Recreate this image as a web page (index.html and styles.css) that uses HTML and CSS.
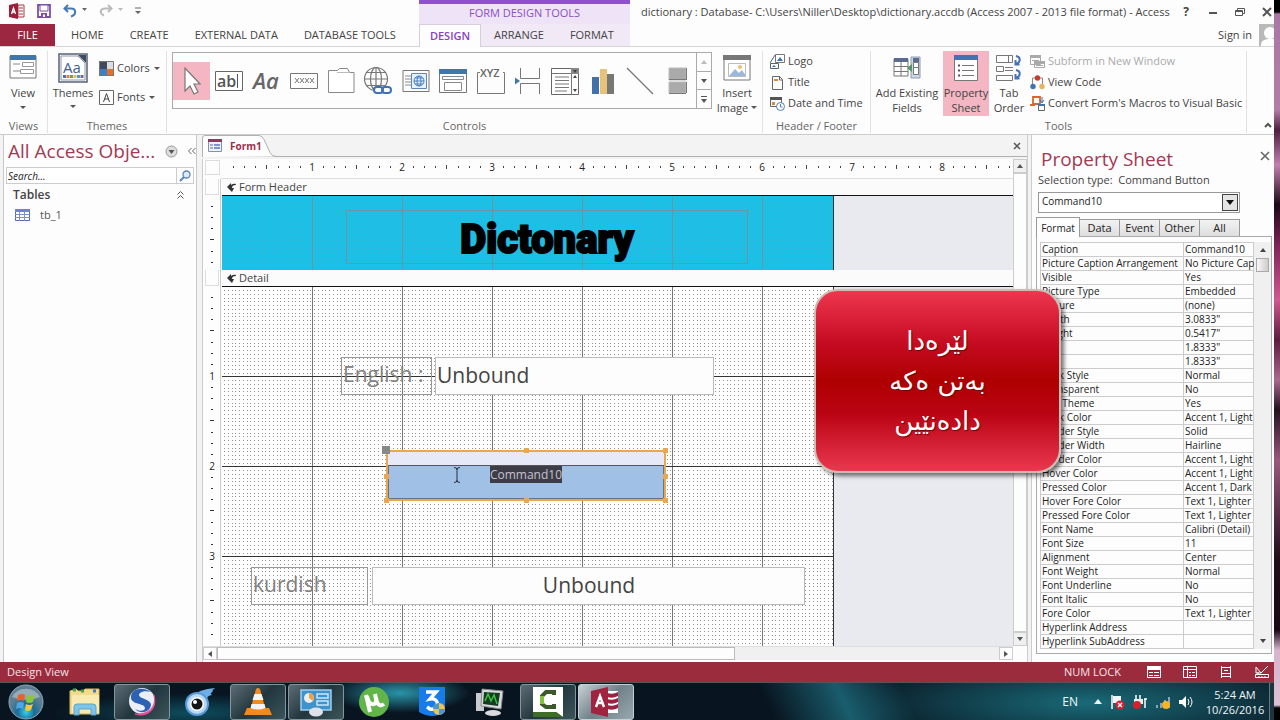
FILE: index.html
```html
<!DOCTYPE html>
<html lang="en">
<head>
<meta charset="utf-8">
<title>dictionary : Database - Access</title>
<link rel="stylesheet" href="styles.css">
</head>
<body>
<div class="screen">
<div class="window">

<header class="top">
  <div class="quick">
    <svg width="16" height="16" viewBox="0 0 16 16"><path d="M9 2h6v12H9z" fill="#fff" stroke="#a4373a"/><path d="M10 5h4M10 8h4M10 11h4" stroke="#a4373a"/><path d="M0 2l9-2v16l-9-2z" fill="#9b1f38"/><path d="M2.500 11l2-6 2 6M3.200 9h2.600" stroke="#fff" fill="none" stroke-width="1.300"/></svg>
    <svg width="14" height="14" viewBox="0 0 14 14"><path d="M1 1h12v12H1z" fill="#fff" stroke="#7a50a8" stroke-width="1.800"/><path d="M3 1h8v6H3z" fill="#fff" stroke="#7a50a8"/><path d="M4 9h6v4H4z" fill="#7a50a8"/><path d="M6 10.500h2V13H6z" fill="#fff"/></svg>
    <svg width="24" height="14" viewBox="0 0 24 14"><path d="M5 1L1.500 4.500 5 8M2 4.500h6c5 0 6 6 0 8" fill="none" stroke="#4478b8" stroke-width="2"/><path d="M19 4h5l-2.500 3z" fill="#666"/></svg>
    <svg width="24" height="14" viewBox="0 0 24 14"><path d="M9 1l3.500 3.500L9 8M12 4.500H6c-5 0-6 5-1 7" fill="none" stroke="#bbb" stroke-width="2"/><path d="M19 4h5l-2.500 3z" fill="#bbb"/></svg>
    <svg width="6" height="8" viewBox="0 0 6 8"><path d="M0 1h6" stroke="#666"/><path d="M0 4h6L3 7z" fill="#666"/></svg>
  </div>
  <div class="ctx-title">FORM DESIGN TOOLS</div>
  <div class="title-row"><span class="title">dictionary : Database- C:\Users\Niller\Desktop\dictionary.accdb (Access 2007 - 2013 file format) - Access</span>
    <div class="wincontrols">
      <button aria-label="Help">?</button>
      <button aria-label="Minimize"><svg width="10" height="10"><path d="M1 6h8" stroke="#555" stroke-width="2"/></svg></button>
      <button aria-label="Restore"><svg width="10" height="10" fill="none" stroke="#555"><path d="M.5 3.500h7v5h-7zM2.500 3V1.500h7v5H8M1 4.500h6"/></svg></button>
      <button aria-label="Close"><svg width="10" height="10"><path d="M1 1l8 8M9 1L1 9" stroke="#555" stroke-width="2"/></svg></button>
    </div>
  </div>
  <nav class="tabs"><button class="file">FILE</button><button>HOME</button><button>CREATE</button><button>EXTERNAL DATA</button><button>DATABASE TOOLS</button></nav>
  <nav class="tabs ctx-tabs"><button class="on">DESIGN</button><button>ARRANGE</button><button>FORMAT</button></nav>
  <div class="account"><button>Sign in</button><svg width="15" height="22"><path d="M0 0h15v22H0z" fill="#b9b9b9"/><circle cx="11" cy="9" r="6" fill="#fff"/><path d="M2 22c0-6 3-7 13-7v7z" fill="#fff"/></svg></div>
</header>

<section class="ribbon">
  <div class="group views">
    <div class="group-body"><button class="big"><svg width="28" height="28" viewBox="0 0 28 28"><path d="M1 2h26v22H1z" fill="#fff" stroke="#777"/><path d="M1 1h26v5H1z" fill="#3f77ad"/><path d="M4 10h7M4 17h7" stroke="#888"/><path d="M13.500 8.500h11v4h-11zM11.500 15.500h13v4h-13z" fill="#fff" stroke="#999"/></svg><span>View</span><i class="caret"></i></button></div>
    <h2>Views</h2>
  </div>
  <div class="group themes">
    <div class="group-body">
      <button class="big"><svg width="30" height="30" viewBox="0 0 30 30"><path d="M1 1h28v28H1z" fill="#fff" stroke="#566078" stroke-width="1.500"/><path d="M3 3h17l7 7v17H3z" fill="#fff" stroke="#8c96a8"/><path d="M20 2h8v8z" fill="#3d4a63"/><text x="5" y="20" class="theme-aa">Aa</text><path d="M5 23.500h3" stroke="#4472c4" stroke-width="3"/><path d="M8.500 23.500h3" stroke="#e67e30" stroke-width="3"/><path d="M12 23.500h3" stroke="#70a050" stroke-width="3"/><path d="M15.500 23.500h3" stroke="#e8c13c" stroke-width="3"/><path d="M19 23.500h3" stroke="#4e9bd0" stroke-width="3"/><path d="M22.500 23.500h3" stroke="#8060a0" stroke-width="3"/></svg><span>Themes</span><i class="caret"></i></button>
      <div class="stack">
        <button class="line"><svg width="15" height="15"><path d="M0 0h8v8H0z" fill="#3f4a60"/><path d="M8 0h7v8H8z" fill="#ddd"/><path d="M0 8h8v7H0z" fill="#3f80c0"/><path d="M8 8h7v7H8z" fill="#e2702c"/><path d="M.5.5h14v14H.5z" fill="none" stroke="#777"/></svg>Colors<i class="caret"></i></button>
        <button class="line"><svg width="15" height="15"><path d="M.5.5h14v14H.5z" fill="#fff" stroke="#666"/><path d="M4.500 12l3-8.500 3 8.500M5.500 9h4" fill="none" stroke="#444"/></svg>Fonts<i class="caret"></i></button>
      </div>
    </div>
    <h2>Themes</h2>
  </div>
  <div class="group controls">
    <div class="group-body">
      <div class="gallery">
        <div class="cells">
          <button class="cell on" aria-label="Select"><svg width="28" height="28"><path d="M7 1v23l5-5 4 8 4-2-4-8h6z" fill="#fff" stroke="#777" stroke-width="1.200"/></svg></button>
          <button class="cell" aria-label="Text Box"><svg width="28" height="28"><path d="M.5 4.500h27v19H.5z" fill="#fff" stroke="#666"/><text x="2" y="20" class="g-ab">ab</text><path d="M22.500 7v14" stroke="#555"/></svg></button>
          <button class="cell" aria-label="Label"><svg width="32" height="32"><text x="3" y="24" class="g-aa">Aa</text></svg></button>
          <button class="cell" aria-label="Button"><svg width="28" height="28"><path d="M.5 6.500h27v15H.5z" fill="#fff" stroke="#777"/><path d="M5 11l4 5M9 11l-4 5M10 11l4 5M14 11l-4 5M15 11l4 5M19 11l-4 5M20 11l4 5M24 11l-4 5" stroke="#777" fill="none"/></svg></button>
          <button class="cell" aria-label="Tab Control"><svg width="28" height="28"><path d="M1.500 25.500V3.500h9l2-2h8l2 4h4.500v20z" fill="#fff" stroke="#888"/><path d="M10 5.500h13" stroke="#bbb"/></svg></button>
          <button class="cell" aria-label="Link"><svg width="30" height="30" fill="none"><g stroke="#777" stroke-width="1.200"><circle cx="13" cy="13" r="11.500"/><ellipse cx="13" cy="13" rx="5.500" ry="11.500"/><path d="M13 1v24M2 13h22M4 6.500h18M4 19.500h18"/></g><g><rect x="11" y="21" width="9" height="6" rx="3" fill="#fff" stroke="#3f72b4" stroke-width="2"/><rect x="19" y="21" width="9" height="6" rx="3" stroke="#3f72b4" stroke-width="2"/></g></svg></button>
          <button class="cell" aria-label="Web Browser Control"><svg width="28" height="28"><path d="M1 3.500h26v21H1z" fill="#fff" stroke="#777"/><path d="M3 9h7M3 12h7M3 15h7M3 18h7" stroke="#888"/><path d="M9.500 6.500h15v15h-15z" fill="#e8f1fa" stroke="#5b88b8"/><g fill="none" stroke="#4b7fb8"><circle cx="17" cy="14" r="5"/><ellipse cx="17" cy="14" rx="2" ry="5"/><path d="M12 14h10M13 11h8M13 17h8"/></g></svg></button>
          <button class="cell" aria-label="Navigation Control"><svg width="28" height="28"><path d="M.5 2.500h27v23H.5z" fill="#fff" stroke="#777"/><path d="M0 2h28v5H0z" fill="#3f77ad"/><path d="M3.500 9.500h21v3h-21zM5.500 15.500h17v8h-17z" fill="#fff" stroke="#888"/></svg></button>
          <button class="cell" aria-label="Option Group"><svg width="28" height="28"><path d="M3 5.500H.5v21h27v-21H26" fill="none" stroke="#777"/><text x="3" y="10" class="g-xyz">XYZ</text></svg></button>
          <button class="cell" aria-label="Page Break"><svg width="28" height="28" fill="none"><path d="M6.500 1v10.500h19V1M6.500 27V16.500h19V27" stroke="#777"/><path d="M1 10.500l5 3.500-5 3.500z" fill="#3f77ad"/></svg></button>
          <button class="cell" aria-label="Combo Box"><svg width="28" height="28"><path d="M.5 1.500h27v26H.5z" fill="#fff" stroke="#666"/><path d="M1 6.500h19M20.500 2v25" stroke="#777"/><path d="M20 1h8v6h-8z" fill="#888"/><path d="M22 3h4l-2 3zM22 11h4l-2-3zM22 22h4l-2 3z" fill="#444"/><path d="M4 10h14M4 13.500h14M4 17h14M4 20.500h14M4 24h12" stroke="#777"/></svg></button>
          <button class="cell" aria-label="Chart"><svg width="28" height="28"><path d="M3 10h7v17H3z" fill="#4272a8"/><path d="M11 2h7v25h-7z" fill="#e6c378"/><path d="M18 7h7v20h-7z" fill="#777"/></svg></button>
          <button class="cell" aria-label="Line"><svg width="28" height="28"><path d="M1 1l26 26" stroke="#777" stroke-width="1.300"/></svg></button>
          <button class="cell" aria-label="Toggle Button"><svg width="28" height="28"><path d="M6 1h17v12H6zM6 15h17v11H6z" fill="#aaa" stroke="#bbb"/><path d="M6 12.500h17M6 26.500h17M23.500 1v12M23.500 15v11" fill="none" stroke="#777"/></svg></button>
        </div>
        <div class="gallery-scroll"><button aria-label="Up"><svg width="6" height="4"><path d="M0 4l3-4 3 4z" fill="#bbb"/></svg></button><button aria-label="Down"><svg width="6" height="4"><path d="M0 0l3 4 3-4z" fill="#555"/></svg></button><button aria-label="More"><svg width="6" height="7"><path d="M0 0h6v1H0zM0 3l3 4 3-4z" fill="#555"/></svg></button></div>
      </div>
      <button class="big insert"><svg width="28" height="28"><path d="M1 2h26v24H1z" fill="#fff" stroke="#777"/><path d="M0 1h28v5H0z" fill="#777"/><path d="M5.500 9.500h17v13h-17z" fill="#fff" stroke="#bbb"/><path d="M6 22l6-7 4 4 3-3 4 6z" fill="#9bb7da"/><circle cx="17" cy="13" r="2" fill="#e9c170"/></svg><span>Insert<br>Image<i class="caret side"></i></span></button>
    </div>
    <h2>Controls</h2>
  </div>
  <div class="group hf">
    <div class="group-body"><div class="stack">
      <button class="line"><svg width="15" height="15" fill="none"><path d="M5.500.5h9v8h-9z" fill="#fff" stroke="#777"/><path d="M7 7l3-4 3 4z" fill="#3f72b4"/><path d="M.5 9.500h8v5h-8zM5 1L0 9" stroke="#567"/><path d="M2 13l2-2 2 2z" fill="#3f72b4"/></svg>Logo</button>
      <button class="line"><svg width="15" height="15"><path d="M2.500 1.500h7l3 3v10h-10z" fill="#fff" stroke="#666"/><path d="M9.500 1v4h3" fill="none" stroke="#666"/><path d="M4 5h4" stroke="#e08838" stroke-width="2"/></svg>Title</button>
      <button class="line"><svg width="15" height="15"><path d="M.5 1.500h11v9H.5z" fill="#fff" stroke="#666"/><path d="M0 1h12v3H0z" fill="#555"/><path d="M2 6h3v3H2z" fill="#e08838"/><circle cx="10.500" cy="10.500" r="4" fill="#fff" stroke="#4f7fb8"/><path d="M10.500 8v3h2" fill="none" stroke="#4f7fb8"/></svg>Date and Time</button>
    </div></div>
    <h2>Header / Footer</h2>
  </div>
  <div class="group tools">
    <div class="group-body">
      <button class="big add"><svg width="28" height="28"><path d="M1 5h14v17H1z" fill="#fff" stroke="#777"/><path d="M1 4h14v4H1z" fill="#5b6b8c"/><path d="M1 12.500h14M1 17.500h14M8 8v14" stroke="#777"/><path d="M18 3h9v21h-9z" fill="#cdd8e6" stroke="#8c9cb4"/><path d="M20 4h6v4h-6z" fill="#5b6b8c"/><path d="M20.500 8.500h5v5h-5zM20.500 13.500h5v7h-5z" fill="#fff" stroke="#777"/><path d="M19 10l-5 4 5 4z" fill="#58936a"/></svg><span>Add Existing<br>Fields</span></button>
      <button class="big prop on"><svg width="28" height="28"><path d="M2.500 2.500h23v24h-23z" fill="#fff" stroke="#777"/><path d="M2 1h24v5H2z" fill="#4472b4"/><path d="M10 11.500h12M10 16.500h12M10 21.500h12" stroke="#777"/><path d="M6 11.500h2M6 16.500h2M6 21.500h2" stroke="#555" stroke-width="2"/></svg><span>Property<br>Sheet</span></button>
      <button class="big order"><svg width="28" height="28" fill="none"><g stroke="#777"><path d="M1.500 1.500h16v7h-16zM13.500 2v6M1.500 12.500h7v5h-7zM10 13.500h8M10 16.500h8M1.500 21.500h16v5h-16z"/></g><g stroke="#4472b4" stroke-width="2"><path d="M21 2c5 1 5 6 0 8M24.500 10.500h-4V6M21 16c5 1 5 6 0 8M24.500 24.500h-4V20"/></g></svg><span>Tab<br>Order</span></button>
      <div class="stack">
        <button class="line off" disabled><svg width="15" height="15"><path d="M0 1h11v3H0zM4 7h11v3H4z" fill="#aaa"/><path d="M.5 3.500h10v7H.5zM4.500 8.500h10v5h-10z" fill="none" stroke="#aaa"/><path d="M2 6.500h7M6 11.500h7" stroke="#aaa"/></svg>Subform in New Window</button>
        <button class="line"><svg width="15" height="15"><path d="M2.500 12V3h3M9 3h3.500v8" fill="none" stroke="#888"/><circle cx="7.500" cy="3" r="2.700" fill="#c8392e"/><circle cx="3" cy="11.500" r="2.700" fill="#3f72b4"/><circle cx="12" cy="11.500" r="2.700" fill="#e6b45a"/></svg>View Code</button>
        <button class="line"><svg width="15" height="15"><path d="M3 1h7v7H3zM0 9h5" fill="none" stroke="#d9662b" stroke-width="1.800"/><path d="M12 1v5M10 4l2 3 2-3" fill="none" stroke="#4272b0"/><path d="M8.500 8.500h6v6h-6z" fill="#fff" stroke="#666"/><path d="M8 8h7v2H8z" fill="#4272b0"/></svg>Convert Form's Macros to Visual Basic</button>
      </div>
    </div>
    <h2>Tools</h2>
  </div>
  <button class="collapse" aria-label="Collapse the ribbon"><svg width="8" height="6"><path d="M1 5l3-3 3 3" fill="none" stroke="#555" stroke-width="2"/></svg></button>
</section>

<main class="work">
  <aside class="nav">
    <div class="nav-head"><h1>All Access Obje...</h1>
      <button aria-label="Categories"><svg width="13" height="13"><circle cx="6.500" cy="6.500" r="5.500" fill="#ddd" stroke="#999"/><path d="M3.500 5h6l-3 4z" fill="#555"/></svg></button>
      <button aria-label="Collapse pane"><svg width="8" height="8" fill="none" stroke="#666"><path d="M3.500 1l-3 3 3 3M7.500 1l-3 3 3 3"/></svg></button></div>
    <div class="search"><input type="text" placeholder="Search..." aria-label="Search"><button aria-label="Go"><svg width="12" height="12"><circle cx="7.500" cy="4.500" r="3.500" fill="#dceafa" stroke="#5b84b4" stroke-width="1.300"/><path d="M5 7l-4 4" stroke="#5b84b4" stroke-width="2"/></svg></button></div>
    <div class="nav-group"><span>Tables</span><svg width="7" height="8" fill="none" stroke="#555"><path d="M.5 3.500l3-3 3 3M.5 7.500l3-3 3 3"/></svg></div>
    <a class="nav-item" href="#"><svg width="15" height="12"><path d="M.5.500h14v11H.5z" fill="#fff" stroke="#5468a8"/><path d="M0 0h15v3H0z" fill="#6d86c8"/><path d="M0 5.500h15M0 8.500h15M4.500 3v9M9.500 3v9" stroke="#8090c0"/></svg>tb_1</a>
  </aside>

  <section class="doc">
    <div class="doc-tabs">
      <svg class="tab-shape" width="74" height="22"><path d="M.5 22V3Q.5.500 3 .5h54q3 0 5 4l6 13q2 4 6 4" fill="#fdfdfd" stroke="#b0b0b0"/></svg>
      <button class="doc-tab"><svg width="14" height="13"><path d="M.5.500h13v12H.5z" fill="#eef2fb" stroke="#8090b8"/><path d="M0 0h14v3H0z" fill="#8f3a5c"/><path d="M2 6h3M2 9h3" stroke="#667"/><path d="M6 5h6v2H6zM6 8h6v2H6z" fill="#7e94cc"/></svg>Form1</button>
      <button class="doc-close" aria-label="Close form"><svg width="8" height="8"><path d="M1 1l6 6M7 1L1 7" stroke="#555" stroke-width="1.500"/></svg></button>
    </div>
    <div class="designer">
      <div class="corner"></div>
      <div class="hruler"><svg width="789" height="18">
        <defs><pattern id="inch" width="90" height="18" patternUnits="userSpaceOnUse"><path d="M11 7h1v2h-1zM22 7h1v2h-1zM33 7h1v2h-1zM44 6h1v4h-1zM56 7h1v2h-1zM67 7h1v2h-1zM78 7h1v2h-1z" fill="#444"/></pattern></defs>
        <rect width="789" height="18" fill="url(#inch)"/>
        <g class="rtext"><text x="90" y="12">1</text><text x="180" y="12">2</text><text x="270" y="12">3</text><text x="360" y="12">4</text><text x="450" y="12">5</text><text x="540" y="12">6</text><text x="630" y="12">7</text><text x="720" y="12">8</text></g></svg></div>
      <div class="vruler">
        <div class="vcap"></div>
        <svg class="v-head" width="14" height="75"><defs><pattern id="vinch" width="14" height="90" patternUnits="userSpaceOnUse"><path d="M6 11h2v1H6zM6 22h2v1H6zM6 33h2v1H6zM5 44h4v1H5zM6 56h2v1H6zM6 67h2v1H6zM6 78h2v1H6z" fill="#333"/></pattern></defs><rect width="14" height="75" fill="url(#vinch)"/></svg>
        <div class="vcap"></div>
        <svg class="v-detail" width="14" height="360"><rect width="14" height="360" fill="url(#vinch)"/><g class="rtext"><text x="7" y="94">1</text><text x="7" y="184">2</text><text x="7" y="274">3</text></g></svg>
      </div>
      <div class="sections">
        <div class="bar"><svg width="9" height="9"><path d="M0 4l4-4v2c4-2 5-1 5 0-3 0-4 1-4 3h2L5 9z" fill="#333"/></svg>Form Header</div>
        <div class="band head-band"><div class="sheet cyan">
          <svg class="grid" width="611" height="74"><defs><pattern id="cdots" width="15" height="15" patternUnits="userSpaceOnUse"><path d="M2 3h1v1H2zM6 3h1v1H6zM10 3h1v1h-1zM13 3h1v1h-1zM2 7h1v1H2zM6 7h1v1H6zM10 7h1v1h-1zM13 7h1v1h-1zM2 11h1v1H2zM6 11h1v1H6zM10 11h1v1h-1zM13 11h1v1h-1zM2 14h1v1H2zM6 14h1v1H6zM10 14h1v1h-1zM13 14h1v1h-1z" fill="#3fb0c8"/></pattern></defs><rect width="611" height="74" fill="url(#cdots)"/><path d="M90.500 0v74M180.500 0v74M270.500 0v74M360.500 0v74M450.500 0v74M540.500 0v74" stroke="#6b979c"/></svg>
          <div class="control title-label">Dictonary</div>
        </div></div>
        <div class="bar"><svg width="9" height="9"><path d="M0 4l4-4v2c4-2 5-1 5 0-3 0-4 1-4 3h2L5 9z" fill="#333"/></svg>Detail</div>
        <div class="band detail-band"><div class="sheet">
          <svg class="grid" width="611" height="360"><defs><pattern id="dots" width="15" height="15" patternUnits="userSpaceOnUse"><path d="M2 3h1v1H2zM6 3h1v1H6zM10 3h1v1h-1zM13 3h1v1h-1zM2 7h1v1H2zM6 7h1v1H6zM10 7h1v1h-1zM13 7h1v1h-1zM2 11h1v1H2zM6 11h1v1H6zM10 11h1v1h-1zM13 11h1v1h-1zM2 14h1v1H2zM6 14h1v1H6zM10 14h1v1h-1zM13 14h1v1h-1z" fill="#929292"/></pattern></defs><rect width="611" height="360" fill="url(#dots)"/><path d="M90.500 0v360M180.500 0v360M270.500 0v360M360.500 0v360M450.500 0v360M540.500 0v360" stroke="#777"/><path d="M0 89.500h611M0 179.500h611M0 269.500h611" stroke="#333"/></svg>
          <div class="control lbl english">English :</div>
          <div class="control box english-box">Unbound</div>
          <div class="control command"><span class="face"><mark>Command10</mark></span>
            <i class="handle h1"></i><i class="handle h2"></i><i class="handle h3"></i><i class="handle h4"></i><i class="handle h5"></i><i class="handle h6"></i><i class="handle h7"></i><i class="handle move"></i></div>
          <svg class="ibeam" width="8" height="16"><path d="M1 .5q3 0 3 2 0-2 3-2M4 2v12M1 15.500q3 0 3-2 0 2 3 2" fill="none" stroke="#234"/></svg>
          <div class="control lbl kurdish">kurdish</div>
          <div class="control box kurdish-box">Unbound</div>
        </div></div>
      </div>
      <div class="vscroll"><button aria-label="Scroll up"><svg width="6" height="4"><path d="M0 4l3-4 3 4z" fill="#555"/></svg></button><div class="thumb"></div><button aria-label="Scroll down"><svg width="6" height="4"><path d="M0 0l3 4 3-4z" fill="#555"/></svg></button></div>
      <div class="hscroll"><button aria-label="Scroll left"><svg width="4" height="6"><path d="M4 0L0 3l4 3z" fill="#555"/></svg></button><div class="thumb"></div><div class="track"></div><button aria-label="Scroll right"><svg width="4" height="6"><path d="M0 0l4 3-4 3z" fill="#555"/></svg></button></div>
    </div>
  </section>

  <aside class="props">
    <div class="props-head"><h1>Property Sheet</h1><button aria-label="Close property sheet"><svg width="10" height="10"><path d="M1 1l8 8M9 1L1 9" stroke="#666" stroke-width="1.600"/></svg></button></div>
    <p>Selection type: &nbsp;Command Button</p>
    <div class="selwrap"><select aria-label="Selected object"><option>Command10</option></select><span class="dd"><svg width="8" height="5"><path d="M0 0h8L4 5z" fill="#111"/></svg></span></div>
    <div class="ptabs"><button class="on">Format</button><button>Data</button><button>Event</button><button>Other</button><button>All</button></div>
    <div class="pbody">
      <div class="ptable"><table>
        <tr><th>Caption</th><td>Command10</td></tr>
        <tr><th>Picture Caption Arrangement</th><td>No Picture Cap</td></tr>
        <tr><th>Visible</th><td>Yes</td></tr>
        <tr><th>Picture Type</th><td>Embedded</td></tr>
        <tr><th>Picture</th><td>(none)</td></tr>
        <tr><th>Width</th><td>3.0833"</td></tr>
        <tr><th>Height</th><td>0.5417"</td></tr>
        <tr><th>Top</th><td>1.8333"</td></tr>
        <tr><th>Left</th><td>1.8333"</td></tr>
        <tr><th>Back Style</th><td>Normal</td></tr>
        <tr><th>Transparent</th><td>No</td></tr>
        <tr><th>Use Theme</th><td>Yes</td></tr>
        <tr><th>Back Color</th><td>Accent 1, Light</td></tr>
        <tr><th>Border Style</th><td>Solid</td></tr>
        <tr><th>Border Width</th><td>Hairline</td></tr>
        <tr><th>Border Color</th><td>Accent 1, Light</td></tr>
        <tr><th>Hover Color</th><td>Accent 1, Light</td></tr>
        <tr><th>Pressed Color</th><td>Accent 1, Dark</td></tr>
        <tr><th>Hover Fore Color</th><td>Text 1, Lighter</td></tr>
        <tr><th>Pressed Fore Color</th><td>Text 1, Lighter</td></tr>
        <tr><th>Font Name</th><td>Calibri (Detail)</td></tr>
        <tr><th>Font Size</th><td>11</td></tr>
        <tr><th>Alignment</th><td>Center</td></tr>
        <tr><th>Font Weight</th><td>Normal</td></tr>
        <tr><th>Font Underline</th><td>No</td></tr>
        <tr><th>Font Italic</th><td>No</td></tr>
        <tr><th>Fore Color</th><td>Text 1, Lighter</td></tr>
        <tr><th>Hyperlink Address</th><td></td></tr>
        <tr><th>Hyperlink SubAddress</th><td></td></tr>
      </table></div>
      <div class="pscroll"><button aria-label="Scroll up"><svg width="6" height="4"><path d="M0 4l3-4 3 4z" fill="#444"/></svg></button><div class="pthumb"></div><button aria-label="Scroll down"><svg width="6" height="4"><path d="M0 0l3 4 3-4z" fill="#444"/></svg></button></div>
    </div>
  </aside>

  <div class="callout" dir="rtl" lang="ckb"><span>لێرەدا</span><span>بەتن ەکە</span><span>دادەنێین</span></div>
</main>

<footer class="status"><span>Design View</span><span class="numlock">NUM LOCK</span>
  <div class="view-btns">
    <button aria-label="Form View"><svg width="14" height="12"><path d="M.5.500h13v11H.5z" fill="none" stroke="#fff"/><path d="M0 0h14v4H0zM2 6h4v1H2zM2 9h4v1H2zM7 6h5v1H7zM7 9h5v1H7z" fill="#fff"/></svg></button>
    <button aria-label="Datasheet View"><svg width="14" height="12" fill="none" stroke="#fff"><path d="M.5.500h13v11H.5zM.5 3.500h13M4.500 0v12M6 6.500h2M9 6.500h3M6 9.500h2M9 9.500h3"/></svg></button>
    <button aria-label="Layout View"><svg width="14" height="12" fill="none" stroke="#fff"><path d="M2.500 0v12M11.500 0v12M2 1.500h10M5 4.500h4M2 7.500h10M2 10.500h10"/></svg></button>
    <button aria-label="Design View"><svg width="14" height="12" fill="none" stroke="#fff"><path d="M.5 8.500h13v3H.5zM3 8V6M1 1v6h5zM6 7l7-7M4 10v2M7 10v2M10 10v2"/></svg></button>
  </div>
</footer>

<footer class="taskbar">
  <button class="start" aria-label="Start"><svg width="36" height="36"><defs><radialGradient id="orb" cx=".5" cy=".8"><stop offset="0" stop-color="#35d0f0"/><stop offset=".5" stop-color="#1b6d98"/><stop offset="1" stop-color="#5d7f92"/></radialGradient></defs><circle cx="18" cy="18" r="17" fill="url(#orb)" stroke="#92aab8"/><path d="M4 13a15 13 0 0 1 28 0q-14 6-28 0" fill="#fff" opacity=".35"/><path d="M10 11q4-2 7 0l-1 6q-3-2-7 0z" fill="#e8612c"/><path d="M19 11q4 2 8 0l-2 7q-4 2-7 0z" fill="#8cc63c"/><path d="M9 19q4-2 7 0l-1 6q-3-2-7 0z" fill="#4ea6e8"/><path d="M18 20q3 2 7 0l-2 6q-3 2-6 0z" fill="#f8c63c"/></svg></button>
  <button class="task" aria-label="Explorer"><svg width="34" height="30"><path d="M3 4l6-2 2 2h5l2-2h14v25H3z" fill="#f2dc8c" stroke="#d8b860"/><path d="M5 8h27v18H5z" fill="#f8eab0"/><path d="M6 3h3M14 4h3" stroke="#4a9e50" stroke-width="3"/><path d="M26 4h3" stroke="#4472c4" stroke-width="3"/><path d="M7 28v-8q0-3 3-3h16q3 0 3 3v8h-5v-6H12v6z" fill="#7cc4e8" stroke="#5aa4cc"/></svg></button>
  <button class="task run" aria-label="Browser"><svg width="32" height="32"><circle cx="16" cy="15" r="13" fill="#e9eef8"/><path d="M25 6C15-1 4 4 5 12c1 7 14 5 14 10 0 3-5 4-10 1 6 6 15 3 16-4 0-6-12-6-12-10 0-3 6-5 12-3z" fill="#2c62b4"/><path d="M28 9c3 12-6 20-19 19 11 4 23-4 19-19z" fill="#e84c98" stroke="#e84c98"/></svg></button>
  <button class="task" aria-label="Media"><svg width="34" height="30"><path d="M8 10Q16 2 32 1q-4 3-2 4-4 1-1 3-5 0-6 6z" fill="#6eaee8"/><circle cx="14" cy="17" r="11" fill="#b8d8f4" stroke="#5a9ad8" stroke-width="2"/><circle cx="14" cy="17" r="7" fill="#fff"/><circle cx="14" cy="17" r="5.500" fill="#151515"/><circle cx="12" cy="15" r="2" fill="#fff"/></svg></button>
  <button class="task run" aria-label="VLC"><svg width="30" height="32"><path d="M4 22h22l3 7H1z" fill="#f08a1c"/><path d="M13 3q2-2 4 0l6 22q-8 3-16 0z" fill="#f38b20"/><path d="M11.500 8h7l2 6h-11zM8.500 18h13l1 4q-8 3-15 0z" fill="#f4f4f4"/></svg></button>
  <button class="task run" aria-label="Control Panel"><svg width="34" height="32"><path d="M2 4h30v20H2z" fill="#3f93cc" stroke="#9fd0ee" stroke-width="1.500"/><circle cx="10" cy="12" r="5" fill="#e8eef4"/><path d="M10 12V7a5 5 0 0 1 4 8z" fill="#f4a03c"/><path d="M18 8h11v4H18zM18 15h11v4H18z" fill="none" stroke="#cbe6f6" stroke-width="1.500"/><ellipse cx="17" cy="26" rx="7" ry="4.500" fill="#dfe3e8"/></svg></button>
  <button class="task" aria-label="uTorrent"><svg width="32" height="32"><circle cx="16" cy="16" r="15" fill="#62b548"/><path d="M8 9l4 17M9 10c2 11 10 10 9 3l-1-5M18 12c1 7 4 9 8 6" fill="none" stroke="#fff" stroke-width="4"/></svg></button>
  <button class="task" aria-label="360"><svg width="30" height="32"><path d="M2 1h26v25q-13 8-26 0z" fill="#177bea"/><path d="M9 6h10l-6 7c10-2 10 12 0 10l-3-2" fill="none" stroke="#fff" stroke-width="3.500"/><circle cx="22" cy="23" r="6" fill="#e8c64c"/><path d="M22 17v6h-6a6 6 0 0 1 6-6M22 23h6a6 6 0 0 1-6 6z" fill="#4c94d4"/></svg></button>
  <button class="task" aria-label="Monitor"><svg width="32" height="30"><path d="M2 6h8v18H2z" fill="#c8ccd0"/><path d="M8 2l21 2-2 18-20-3z" fill="#d8dcdf" stroke="#888"/><path d="M10 5l16 1-2 13-15-2z" fill="#153c20"/><path d="M11 14l3-7 3 7 3-6 3 9" fill="none" stroke="#39c044" stroke-width="1.500"/><ellipse cx="19" cy="26" rx="8" ry="3" fill="#d8dcdf"/></svg></button>
  <button class="task run" aria-label="Camtasia"><svg width="32" height="32"><path d="M1 1h30v30L24 26H1z" fill="#fff"/><path d="M1 26h23l7 5H1z" fill="#3f6c28"/><path d="M22 9V6H14l-4 4v8l4 3h8v-3" fill="none" stroke="#3c5a28" stroke-width="4"/><path d="M10 10v8" stroke="#86c040" stroke-width="4"/></svg></button>
  <button class="task run active" aria-label="Access"><svg width="32" height="30"><path d="M16 4h12v22H16z" fill="#fff"/><path d="M17 6q6 2 11-1v4q-5 3-11 1zM17 12q6 2 11-1v4q-5 3-11 1zM17 18q6 2 11-1v4q-5 3-11 1z" fill="#9b2340"/><path d="M1 4l17-4v30L1 26z" fill="#a02440"/><path d="M6 20l4-11 4 11M7.500 16h5" fill="none" stroke="#fff" stroke-width="2.400"/></svg></button>
  <div class="tray"><span class="lang">EN</span>
    <svg width="8" height="5"><path d="M0 5l4-5 4 5z" fill="#e8f4f8"/></svg>
    <svg width="16" height="16"><path d="M3 1v14" stroke="#fff" stroke-width="1.500"/><path d="M4 2h8v7H4z" fill="#f4f8fa"/><circle cx="11" cy="11" r="4.500" fill="#d8202c"/><path d="M9 9l4 4M13 9l-4 4" stroke="#fff" stroke-width="1.300"/></svg>
    <svg width="16" height="16"><path d="M4 1v5M8 1v5M12 5h3M13 5v9" stroke="#fff" stroke-width="1.500" fill="none"/><path d="M2 5h9v5H2z" fill="#eee"/><circle cx="5" cy="11" r="4" fill="#d8202c"/></svg>
    <svg width="16" height="16"><path d="M1 14v-3h2v3zM5 14V9h2v5zM9 14V6h2v8zM13 14V3h2v11z" fill="#8aa4b4"/><circle cx="11" cy="11" r="4" fill="#f4b428"/></svg>
    <svg width="16" height="16" fill="none"><path d="M1 6h3l4-4v12l-4-4H1z" fill="#fff"/><path d="M10 5q2 3 0 6M12 3q4 5 0 10" stroke="#fff"/></svg>
    <div class="clock"><span>5:24 AM</span><span>10/26/2016</span></div>
    <button class="peek" aria-label="Show desktop"></button>
  </div>
</footer>
</div>
<div class="wallpaper"></div>
</div>
</body>
</html>
```
FILE: styles.css
```css
* { box-sizing: border-box; }
body { margin: 0; font: 11px/14px "Open Sans", "Noto Sans", sans-serif; color: #444; background: #000; }
button { font: inherit; color: inherit; background: none; border: 0; padding: 0; margin: 0; display: flex; align-items: center; justify-content: center; white-space: nowrap; }
h1, h2, p { margin: 0; font-weight: 400; }
svg { flex: none; display: block; }
.screen { display: flex; height: 100vh; overflow: hidden; }
.window { flex: 1; min-width: 0; display: flex; flex-direction: column; background: #fdfdfd; }
.wallpaper { width: 6px; background: linear-gradient(#000 12px, #a878a4 14px, #b47ca8 110px, #4c2040 130px, #c080b0 165px, #1c0814 205px, #7c2458 245px, #d05890 300px, #5c1c3c 340px, #a86890 380px, #24101c 410px, #98587c 460px, #200c18 560px, #1a0814 630px, #d8b4cc 650px, #dcc0d4 705px, #000 708px); }

.top { display: grid; grid-template-columns: 419px 211px 1fr; grid-template-rows: 24px 22px; border-bottom: 1px solid #d5d5d5; }
.quick { display: flex; align-items: center; gap: 12px; padding: 0 9px; height: 22px; }
.ctx-title { background: #efe4f7; border-top: 4px solid #8e50cc; color: #8a4fc4; text-align: center; line-height: 18px; }
.title-row { display: flex; align-items: center; justify-content: space-between; padding: 0 2px 0 11px; }
.title { white-space: nowrap; }
.wincontrols { display: flex; gap: 17px; font-weight: 700; font-size: 12px; }
.wincontrols button { width: 10px; }
.tabs { display: flex; padding-right: 4px; }
.tabs button { padding: 0 13px; height: 22px; flex: none; }
.tabs .file { background: #9c2740; color: #fff; width: 55px; padding: 0; margin-right: 3px; }
.ctx-tabs { background: #f1e9f6; }
.ctx-tabs .on { background: #fdfdfd; color: #8a3fc0; font-weight: 600; height: 23px; border: 1px solid #d8ccde; border-bottom: 0; width: 62px; padding: 0; }
.account { display: flex; justify-content: flex-end; gap: 7px; }

.ribbon { display: flex; height: 88px; border-bottom: 1px solid #ccc; }
.group { display: flex; flex-direction: column; border-right: 1px solid #e2e2e2; margin: 4px 0 1px; padding-top: 1px; }
.group-body { display: flex; flex: 1; }
.group h2 { font-size: 11px; line-height: 14px; text-align: center; color: #666; }
.views { width: 48px; }
.themes { width: 119px; }
.controls { flex: 1; }
.hf { width: 108px; }
.tools { width: 376px; }
.collapse { width: 27px; align-self: flex-end; height: 18px; padding-left: 14px; }
.big { flex-direction: column; justify-content: flex-start; gap: 3px; padding-top: 2px; text-align: center; line-height: 15px; }
.views .big { width: 46px; }
.themes .big { width: 50px; padding-top: 1px; gap: 2px; }
.big > .caret { margin-top: 3px; }
.insert { width: 50px; }
.add { width: 72px; }
.prop { width: 46px; }
.prop.on, .cell.on { background: #f4b6c2; }
.big.prop { margin-top: -1px; padding-top: 3px; height: 65px; }
.order { width: 40px; }
.caret { border: 3px solid transparent; border-top-color: #555; border-bottom: 0; width: 0; height: 0; }
.line .caret { margin-left: 1px; }
.caret.side { display: inline-block; margin-left: 3px; vertical-align: 3px; }
.stack { display: flex; flex-direction: column; gap: 5px; }
.themes .stack { gap: 13px; padding: 8px 0 0 1px; }
.hf .stack { padding: 1px 0 0 7px; }
.tools .stack { padding: 1px 0 0 1px; }
.line { gap: 3px; justify-content: flex-start; height: 16px; }
.off { color: #aaa; }
.controls .group-body { padding-left: 5px; }
.gallery { flex: 1; display: flex; border: 1px solid #aaa; height: 57px; }
.cells { display: flex; flex: 1; align-items: center; }
.cell { flex: 1; height: 38px; }
.gallery-scroll { width: 15px; display: flex; flex-direction: column; border-left: 1px solid #aaa; }
.gallery-scroll button { flex: 1; border-bottom: 1px solid #aaa; }
.gallery-scroll button:last-child { border: 0; }
.theme-aa { font: 15px "Open Sans", sans-serif; fill: #3f5f90; }
.g-ab { font: 600 16px "Open Sans", sans-serif; fill: #555; }
.g-aa { font: italic 600 22px "Open Sans", sans-serif; fill: #666; }
.g-xyz { font: 600 11px "Open Sans", sans-serif; fill: #666; }

.work { position: relative; flex: 1; min-height: 0; display: flex; background: #f3f3f3; }
.nav { width: 194px; margin-left: 3px; background: #fdfdfd; border: 1px solid #c8c8c8; border-width: 0 1px; }
.nav-head { display: flex; align-items: center; gap: 10px; padding: 0 5px 0 4px; height: 32px; }
.nav h1, .props h1 { font-size: 19px; line-height: 28px; color: #a23a54; white-space: nowrap; }
.nav h1 { flex: 1; }
.search { display: flex; margin: 0 2px; height: 17px; border: 1px solid #ccc; }
.search input { flex: 1; min-width: 0; border: 0; padding: 0 1px; background: #fff; font: italic 10px/14px "Open Sans", sans-serif; }
.search input::placeholder { color: #222; opacity: 1; }
.search button { width: 17px; border-left: 1px solid #ccc; }
.nav-group { display: flex; justify-content: space-between; align-items: center; padding: 0 12px 0 9px; height: 22px; font-weight: 600; font-size: 12px; }
.nav-item { display: flex; align-items: center; gap: 10px; padding-left: 11px; height: 18px; color: #555; text-decoration: none; }

.doc { flex: 1; min-width: 0; display: flex; flex-direction: column; margin-left: 5px; border-right: 1px solid #ccc; }
.doc-tabs { position: relative; height: 22px; display: flex; justify-content: space-between; align-items: center; border-bottom: 1px solid #b0b0b0; padding: 0 6px; }
.tab-shape { position: absolute; left: 0; top: 0; }
.doc-tab { position: relative; gap: 8px; color: #9c2f4c; font-weight: 700; font-size: 10px; }
.designer { flex: 1; min-height: 0; margin-top: 2px; display: grid; grid-template-columns: 18px 1fr 14px; grid-template-rows: 20px 1fr 16px; border-left: 1px solid #ccc; background: #fdfdfd; }
.corner { margin: 1px 1px 4px 2px; border: 1px solid #ddd; }
.hruler { border-bottom: 1px solid #ddd; overflow: hidden; padding-left: 1px; }
.rtext { font: 10px "Open Sans", sans-serif; fill: #222; text-anchor: middle; }
.vruler { overflow: hidden; padding-left: 2px; border-right: 1px solid #ccc; }
.vcap { height: 16px; border: 1px solid #ddd; border-top: 0; width: 14px; }
.sections { overflow: hidden; padding-left: 1px; min-width: 0; }
.bar { display: flex; align-items: center; gap: 3px; height: 17px; padding-left: 5px; border-bottom: 1px solid #111; background: #fbfbfb; }
.band { background: #e8eaf0; }
.sheet { position: relative; width: 612px; border-right: 1px solid #333; background: #fff; }
.head-band, .head-band .sheet { height: 74px; }
.detail-band, .detail-band .sheet { height: 360px; }
.sheet.cyan { background: #1cc0e6; }
.grid { position: absolute; left: 0; top: 0; }
.control { position: absolute; }
.title-label { left: 124px; top: 14px; width: 402px; height: 54px; border: 1px solid #6b979c; color: #000; font: 900 40px/58px Roboto, sans-serif; text-align: center; -webkit-text-stroke: 2px #000; }
.lbl, .box { height: 38px; font-size: 21px; line-height: 32px; padding-left: 1px; border: 1px solid #999; white-space: nowrap; }
.lbl { color: #808080; }
.box { background: #fdfdfd; border-color: #bbb; line-height: 34px; }
.english { left: 119px; top: 70px; width: 91px; }
.english-box { left: 213px; top: 70px; width: 279px; }
.kurdish { left: 29px; top: 280px; width: 117px; }
.kurdish-box { left: 150px; top: 280px; width: 433px; text-align: center; }
.command { left: 164px; top: 163px; width: 280px; height: 51px; border: 2px solid #eba650; background: #e6eaf8; padding-top: 13px; }
.face { display: block; height: 34px; background: #a0c0e6; border: 1px solid #667488; border-top-color: #555; text-align: center; line-height: 17px; }
.face mark { display: inline-block; background: #3d3d47; color: #c8c0d0; font-size: 12px; }
.handle { position: absolute; width: 5px; height: 5px; background: #eba650; }
.h1 { left: 136px; top: -4px; }
.h2 { right: -4px; top: -4px; }
.h3 { left: -4px; top: 22px; }
.h4 { right: -4px; top: 22px; }
.h5 { left: -4px; bottom: -4px; }
.h6 { left: 136px; bottom: -4px; }
.h7 { right: -4px; bottom: -4px; }
.move { left: -6px; top: -6px; width: 8px; height: 8px; background: #888; }
.ibeam { position: absolute; left: 231px; top: 180px; }
.vscroll { grid-column: 3; grid-row: 1 / 3; display: flex; flex-direction: column; background: #f0f0f0; }
.vscroll button { height: 14px; border: 1px solid #ccc; }
.vscroll .thumb { flex: 1; border: 1px solid #ccc; background: #fdfdfd; }
.hscroll { grid-column: 1 / 3; grid-row: 3; display: flex; background: #f0f0f0; border-top: 1px solid #ddd; height: 14px; }
.hscroll button { width: 14px; border: 1px solid #ccc; background: #fdfdfd; }
.hscroll .thumb { flex: 517; border: 1px solid #bbb; background: #fdfdfd; }
.hscroll .track { flex: 264; }

.props { width: 243px; margin-left: 3px; background: #fdfdfd; padding: 10px 2px 0 4px; border-left: 1px solid #ccc; font-size: 10px; color: #222; }
.props-head { display: flex; justify-content: space-between; padding: 0 2px 0 5px; height: 28px; }
.props-head button { align-self: flex-start; margin-top: 6px; }
.props p { padding-left: 2px; font-size: 11px; line-height: 14px; color: #444; }
.selwrap { position: relative; width: 202px; height: 21px; margin: 5px 0 0 2px; }
.selwrap select { width: 100%; height: 100%; appearance: none; border: 1px solid #999; background: #fff; font: 10px/17px "Open Sans", sans-serif; color: #222; padding: 0 3px 2px; border-radius: 0; }
.dd { position: absolute; right: 2px; top: 2px; width: 16px; height: 17px; background: #e4e4e4; border: 1px solid #444; display: flex; align-items: center; justify-content: center; pointer-events: none; }
.ptabs { display: flex; align-items: flex-end; height: 19px; margin-top: 4px; font-size: 11px; }
.ptabs button { width: 40px; height: 17px; border: 1px solid #999; border-bottom: 0; border-left: 0; background: linear-gradient(#f2f2f2, #dedede); }
.ptabs .on { width: 44px; height: 20px; margin-bottom: -1px; background: #fdfdfd; border-left: 1px solid #999; position: relative; font-size: 10px; }
.pbody { display: flex; border: 1px solid #aaa; padding: 5px 0 4px 3px; height: 418px; overflow: hidden; }
.ptable { flex: 1; min-width: 0; }
table { width: 100%; border-collapse: collapse; table-layout: fixed; }
tr { height: 14px; }
th, td { font-weight: 400; text-align: left; padding: 0 1px; line-height: 13px; height: 14px; white-space: nowrap; border: 1px solid #ccc; }
th { width: 143px; }
.pscroll { width: 17px; background: #f0f0f0; display: flex; flex-direction: column; }
.pscroll button { height: 16px; }
.pscroll button:last-child { margin-top: auto; }
.pthumb { height: 14px; width: 13px; margin-left: 2px; background: linear-gradient(90deg, #f8f8f8, #ccc); border: 1px solid #aaa; }

.callout { position: absolute; right: 213px; top: 154px; width: 247px; height: 184px; border: 2px solid #cdbcb2; border-radius: 24px; background: linear-gradient(#ee3650, #c40a20 30%, #ae0000 50%, #ba0414 68%, #ea3850); box-shadow: 3px 3px 4px rgba(0, 0, 0, .55); color: #fff; font: 26px/40px "DejaVu Sans", sans-serif; display: flex; flex-direction: column; align-items: center; justify-content: center; text-shadow: 1px 1px 1px #700; }

.status { height: 21px; display: flex; align-items: center; background: #9b2c3e; color: #f4e4e6; padding: 0 5px 0 7px; border-bottom: 1px solid #555; }
.numlock { margin-left: auto; }
.view-btns { display: flex; gap: 22px; margin-left: 26px; }
.taskbar { height: 37px; display: flex; align-items: center; padding-left: 8px; background: linear-gradient(65deg, transparent 60%, rgba(40, 150, 170, .55) 66%, transparent 71%), radial-gradient(ellipse 260px 50px at 1090px 20px, #1a6a78, transparent), radial-gradient(ellipse 70px 20px at 400px 10px, #2a94a8, transparent), radial-gradient(ellipse 140px 20px at 190px 30px, #0e4c5c, transparent), #08141f; }
.start { width: 36px; }
.task { width: 56px; height: 36px; margin-right: 2px; }
.start + .task { margin-left: 12px; }
.task.run { border: 1px solid #85959c; border-radius: 3px; background: linear-gradient(135deg, #5d6c74, #22363e 50%, #3b545a); }
.task.active { background: linear-gradient(135deg, #c8d0d4, #70828a 50%, #98a8ae); border-color: #c4d0d4; }
.tray { margin-left: auto; display: flex; align-items: center; gap: 7px; height: 100%; color: #f0f8fa; }
.lang { margin-right: 9px; font-size: 12px; }
.clock { display: flex; flex-direction: column; text-align: center; width: 62px; line-height: 15px; margin-left: 3px; }
.peek { width: 5px; height: 100%; border-left: 1px solid #678; background: #1c343e; margin-left: -4px; }
```
